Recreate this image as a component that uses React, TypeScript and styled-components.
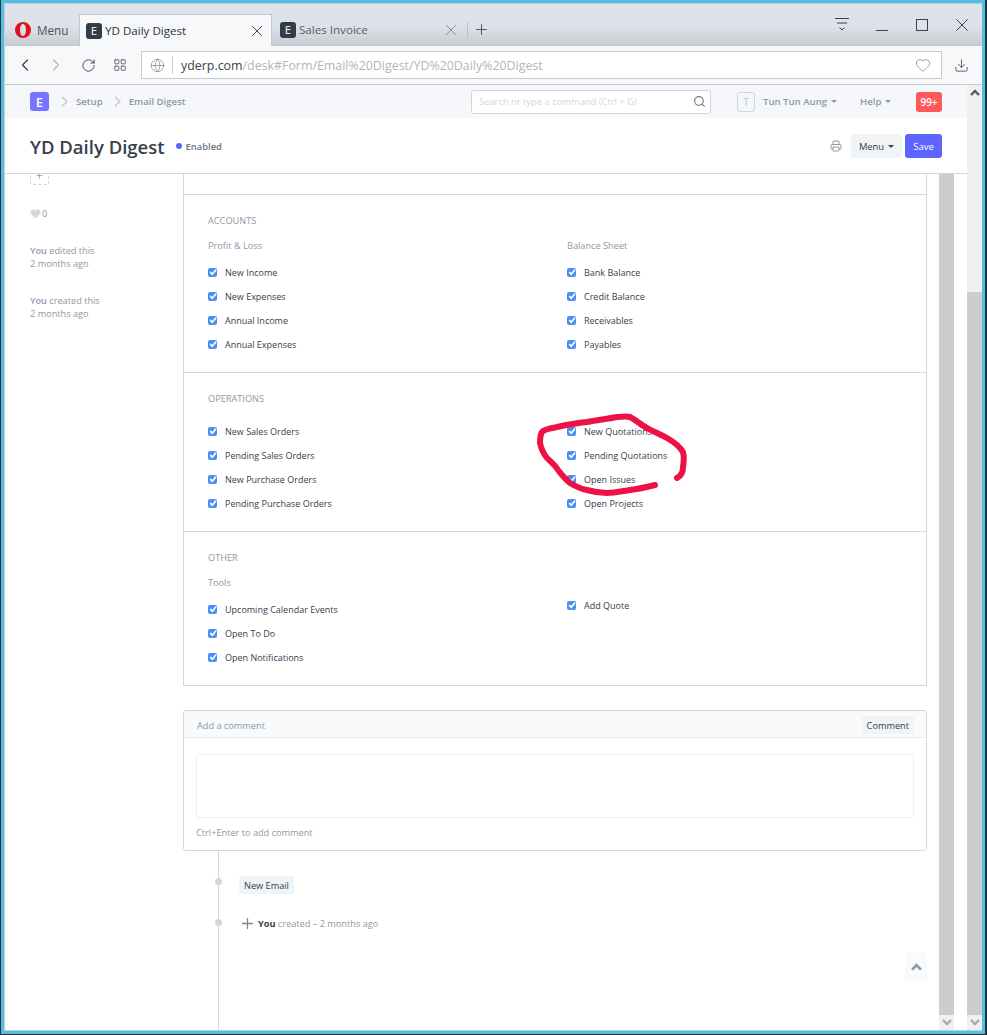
import React from "react";
import styled, { createGlobalStyle } from "styled-components";
import { ChevronLeft, ChevronRight, RotateCw, LayoutGrid, Globe, Heart, Download, X, Plus, Search, Printer } from "lucide-react";

const Global = createGlobalStyle`
  html, body { margin: 0; padding: 0; background: #fff; }
  * { box-sizing: border-box; }
  #root { width: 987px; height: 1035px; overflow: hidden; }
`;

const UI = `"Open Sans", "Noto Sans", sans-serif`;

const Frame = styled.div`
  width: 987px; height: 1035px; background: #52bfe6;
  border-style: solid; border-color: #2a2f38; border-width: 0 2px 1px 1px;
  padding: 3px 3px 3px 3px; font-family: ${UI};
`;
const Win = styled.div`
  height: 100%; display: flex; flex-direction: column; background: #fff;
  border-left: 1px solid #c9ccd1; border-top: 1px solid #c9ccd1; border-bottom: 1px solid #c9ccd1;
  overflow: hidden; position: relative;
`;
const TabBar = styled.div`
  height: 42px; flex: none; display: flex; align-items: flex-end;
  background: linear-gradient(#dfe4eb 0%, #dde2e9 55%, #c8ccd3 100%);
  border-bottom: 1px solid #c4c8ce;
`;
const MenuTab = styled.div`
  width: 74px; height: 31px; display: flex; align-items: center; padding-left: 10px; gap: 6px;
  font-size: 11.7px; color: #4a5260;
`;
const Tab = styled.div<{ $active?: boolean }>`
  height: ${p => (p.$active ? "32px" : "31px")}; width: ${p => (p.$active ? "193px" : "195px")};
  display: flex; align-items: center;
  padding: 0 ${p => (p.$active ? "5px" : "7px")} 0 ${p => (p.$active ? "6px" : "8px")}; gap: 3px;
  background: ${p => (p.$active ? "#f7f8fa" : "transparent")};
  border: ${p => (p.$active ? "1px solid #c4c8ce" : "none")}; border-bottom: none;
  font-size: 11.6px; color: ${p => (p.$active ? "#2c3440" : "#565e6a")};
  margin-bottom: ${p => (p.$active ? "-1px" : "0")};
  svg { margin-left: auto; color: ${p => (p.$active ? "#2c3440" : "#7d838c")}; }
`;
const Favicon = styled.span`
  width: 16px; height: 16px; border-radius: 3px; background: #333c49; color: #fff; flex: none;
  display: flex; align-items: center; justify-content: center; font-size: 11.5px;
`;
const NewTab = styled.div`
  height: 31px; display: flex; align-items: center; color: #3a424e;
  &::before { content: ""; width: 1px; height: 16px; background: #bdc2c9; margin-right: 5px; }
`;
const WinControls = styled.div`
  margin-left: auto; align-self: flex-start; display: flex; align-items: flex-start;
  color: #3a424e; padding: 14px 14px 0 0; gap: 28px;
`;
const ListIcon = styled.svg`
  margin-right: -1px;
`;
const Toolbar = styled.div`
  height: 39px; flex: none; display: flex; align-items: center; background: #f7f8fa;
  border-bottom: 1px solid #c6cad0; color: #3a424e;
`;
const NavIcon = styled.span<{ $w: number; $faded?: boolean }>`
  width: ${p => p.$w}px; flex: none; display: flex; justify-content: center;
  color: ${p => (p.$faded ? "#b6bbc2" : "#3a424e")};
`;
const Address = styled.div`
  width: 801px; height: 28px; flex: none; background: #fff; border: 1px solid #c8cbd0; display: flex; align-items: center;
  padding: 0 10px 0 8px; color: #7b8087;
`;
const Sep = styled.span`
  width: 1px; height: 18px; background: #c8cbd0; margin: 0 8px 0 7px;
`;
const Url = styled.span`
  font-size: 12.4px; color: #b2b6bc; white-space: nowrap; flex: 1;
  b { font-weight: 400; color: #3a424e; }
`;
const Viewport = styled.div`
  flex: 1; min-height: 0; display: flex;
`;
const PageCol = styled.div`
  width: 962px; flex: none; display: flex; flex-direction: column; min-height: 0;
`;
const Track = styled.div<{ $bg: string }>`
  width: 15px; flex: none; display: flex; flex-direction: column; background: ${p => p.$bg};
`;
const ArrowBtn = styled.div<{ $color: string; $bg?: string }>`
  height: 15px; flex: none; display: flex; align-items: center; justify-content: center;
  color: ${p => p.$color}; background: ${p => p.$bg || "transparent"};
`;
const Thumb = styled.div<{ $top: number }>`
  flex: 1; background: #cdcdcd; margin-top: ${p => p.$top}px;
`;
const Navbar = styled.div`
  height: 33px; flex: none; display: flex; align-items: center; background: #f5f7fa;
  padding: 0 25px; font-size: 9.6px; font-weight: 600; color: #8d99a6;
`;
const Logo = styled.span`
  width: 19px; height: 19px; border-radius: 3px; background: #7575ff; color: #fff; flex: none;
  display: flex; align-items: center; justify-content: center; font-size: 13px; font-weight: 600;
`;
const Crumb = styled.span<{ $ml: number }>`
  display: flex; align-items: center; color: #8d99a6; white-space: nowrap; margin-left: ${p => p.$ml}px;
  svg { color: #c0c6cc; margin-right: 8px; }
`;
const SearchBox = styled.div`
  width: 240px; height: 24px; flex: none; margin-left: auto; background: #fff; border: 1px solid #d1d8dd; border-radius: 3px;
  display: flex; align-items: center; justify-content: space-between; padding: 0 4px 0 7px;
  font-weight: 400; color: #d1d8dd; font-size: 9.4px; svg { color: #6c7680; }
`;
const Avatar = styled.span`
  width: 18px; height: 20px; border: 1px solid #d1d8dd; border-radius: 3px; margin-left: 26px; flex: none;
  display: flex; align-items: center; justify-content: center; color: #c0c6cc; font-weight: 400; font-size: 10px;
`;
const NavText = styled.span<{ $w: number; $ml?: number }>`
  width: ${p => p.$w}px; flex: none; white-space: nowrap; display: flex; align-items: center;
  margin-left: ${p => p.$ml || 0}px;
`;
const Caret = styled.i<{ $dark?: boolean }>`
  display: inline-block; margin-left: 4px; width: 0; height: 0;
  border-left: 3px solid transparent; border-right: 3px solid transparent;
  border-top: 3px solid ${p => (p.$dark ? "#36414c" : "#8d99a6")};
`;
const Badge = styled.span`
  width: 26px; height: 20px; flex: none; border-radius: 3px; background: #ff5858; color: #fff;
  display: flex; align-items: center; justify-content: center; font-size: 10px; font-weight: 600;
`;
const PageHead = styled.div`
  height: 56px; flex: none; display: flex; align-items: center; background: #fff;
  border-bottom: 1px solid #d1d8dd; padding: 1px 25px 0;
`;
const Title = styled.h1`
  margin: 0; font-size: 18.5px; font-weight: 600; color: #36414c; white-space: nowrap;
`;
const Indicator = styled.span`
  display: flex; align-items: center; margin-left: 11px; font-size: 9.4px; font-weight: 600; color: #6c7680;
  &::before { content: ""; width: 6px; height: 6px; border-radius: 50%; background: #5e64ff; margin-right: 4px; }
`;
const HeadActions = styled.div`
  margin-left: auto; display: flex; align-items: center; color: #8d99a6;
`;
const Btn = styled.span<{ $primary?: boolean }>`
  height: 24px; display: flex; align-items: center; justify-content: center; border-radius: 3px;
  width: ${p => (p.$primary ? "37px" : "51px")}; margin-left: ${p => (p.$primary ? "3px" : "9px")};
  background: ${p => (p.$primary ? "#5e64ff" : "#f0f4f7")};
  color: ${p => (p.$primary ? "#fff" : "#36414c")}; font-size: 9.4px;
`;
const Scroll = styled.div`
  flex: 1; min-height: 0; display: flex; position: relative; overflow: hidden;
`;
const Sidebar = styled.aside`
  width: 178px; flex: none; padding-left: 25px; font-size: 9.2px; line-height: 13px; color: #8d99a6;
  b { font-weight: 600; }
`;
const TagAdd = styled.div`
  width: 19px; height: 11px; border: 1px dashed #d1d8dd; border-top: none; border-radius: 0 0 3px 3px;
  display: flex; justify-content: center; align-items: flex-end; color: #8d99a6; overflow: hidden;
  svg { margin-bottom: 4px; flex: none; }
`;
const Likes = styled.div`
  margin-top: 22px; display: flex; align-items: center; gap: 1px; height: 13px; color: #8d99a6;
`;
const SideEntry = styled.div`
  margin-top: 24px;
`;
const Main = styled.main`
  width: 744px; flex: none; display: flex; flex-direction: column;
`;
const Form = styled.section`
  border: 1px solid #d1d8dd; border-top: none; padding-top: 20px;
`;
const Section = styled.div`
  border-top: 1px solid #d1d8dd; padding: 19px 24px 16px;
`;
const SectionHead = styled.h4`
  margin: 0; font-size: 9.2px; line-height: 14px; font-weight: 400; color: #8d99a6; text-transform: uppercase;
`;
const Cols = styled.div`
  display: grid; grid-template-columns: 359px 1fr;
`;
const SubHead = styled.div`
  margin-top: 11px; font-size: 9.2px; line-height: 14px; color: #8d99a6;
`;
const List = styled.div<{ $top: number }>`
  margin-top: ${p => p.$top}px;
`;
const Row = styled.label`
  height: 24px; display: flex; align-items: center; font-size: 9px; color: #36414c; white-space: nowrap;
`;
const Box = styled.span`
  width: 9px; height: 9px; border-radius: 2px; background: #4a90f0; margin-right: 8px; flex: none;
  display: flex; align-items: center; justify-content: center;
`;
const Comment = styled.section`
  margin-top: 24px; border: 1px solid #d1d8dd; border-radius: 3px; height: 141px; flex: none;
`;
const CommentHead = styled.div`
  height: 27px; display: flex; align-items: center; justify-content: space-between; padding: 2px 12px 0 13px;
  background: #f8fafc; border-bottom: 1px solid #ebeff2; border-radius: 3px 3px 0 0;
  font-size: 9.2px; color: #8d99a6;
`;
const SmallBtn = styled.span`
  height: 18px; padding: 0 5px; display: flex; align-items: center; background: #f0f4f7; border-radius: 3px;
  color: #36414c; font-size: 9.2px;
`;
const TextArea = styled.div`
  margin: 16px 12px 0; height: 64px; border: 1px solid #ebeff2; border-radius: 3px;
`;
const Hint = styled.div`
  margin: 8px 12px 0; font-size: 9.2px; line-height: 14px; color: #8d99a6;
`;
const Timeline = styled.div`
  flex: 1; margin-left: 35px; border-left: 1px solid #d1d8dd; padding: 25px 0 0 20px; position: relative;
`;
const TimelineItem = styled.div<{ $mt?: number; $dot: number }>`
  position: relative; display: flex; align-items: center; height: 18px; font-size: 9.2px; color: #8d99a6;
  margin-top: ${p => p.$mt || 0}px;
  b { font-weight: 700; color: #36414c; }
  &::before {
    content: ""; position: absolute; left: -24px; top: ${p => p.$dot}px; width: 7px; height: 7px; border-radius: 50%; background: #d1d8dd;
  }
  svg { color: #7b8794; margin: 0 2px 0 0; }
`;
const ToTop = styled.div`
  position: absolute; left: 900px; top: 779px; width: 22px; height: 28px; border-radius: 3px; background: #f8fafc;
  display: flex; align-items: center; justify-content: center; color: #8d99a6;
`;
const Ink = styled.svg`
  position: absolute; left: 0; top: 0; pointer-events: none;
`;
const Spacer = styled.div`
  width: 13px; flex: none;
`;
const Gap = styled.div`
  width: 12px; flex: none;
`;

const Chev = ({ up, size = 11, w = 2.4 }: { up?: boolean; size?: number; w?: number }) => (
  <svg width={size} height={size * 0.7} viewBox="0 0 10 7" fill="none" stroke="currentColor" strokeWidth={w}>
    <path d={up ? "M1 6l4-4 4 4" : "M1 1l4 4 4-4"} />
  </svg>
);
const CrumbChev = () => (
  <svg width="7" height="11" viewBox="0 0 7 11" fill="none" stroke="currentColor" strokeWidth="1.3"><path d="M1 .7l5 4.8-5 4.8" /></svg>
);
const Tick = () => (
  <svg width="8" height="8" viewBox="0 0 10 10" fill="none" stroke="#fff" strokeWidth="2.2"><path d="M1.5 5.2l2.6 2.6 4.6-5.6" /></svg>
);
const Opera = () => (
  <svg width="16" height="16" viewBox="0 0 16 16"><path fillRule="evenodd" fill="#e0101f" d="M8 0a8 8 0 1 0 0 16A8 8 0 0 0 8 0zm0 2c1.8 0 3 2.6 3 6s-1.2 6-3 6-3-2.6-3-6 1.2-6 3-6z" /></svg>
);
const Check = ({ label }: { label: string }) => (
  <Row><Box><Tick /></Box>{label}</Row>
);
const Checks = ({ items, top }: { items: string[]; top: number }) => (
  <List $top={top}>{items.map(i => <Check key={i} label={i} />)}</List>
);

export default function App() {
  return (
    <Frame>
      <Global />
      <Win>
        <TabBar>
          <MenuTab><Opera />Menu</MenuTab>
          <Tab $active><Favicon>E</Favicon>YD Daily Digest<X size={18} strokeWidth={1.2} /></Tab>
          <Tab><Favicon>E</Favicon>Sales Invoice<X size={18} strokeWidth={1.2} /></Tab>
          <NewTab><Plus size={17} strokeWidth={1.2} /></NewTab>
          <WinControls>
            <ListIcon width="14" height="14" viewBox="0 0 14 14" fill="none" stroke="currentColor"><path d="M0 .5h14M2 5h10M4.5 9.5l2.5 2.5 2.5-2.5" /></ListIcon>
            <svg width="12" height="14" viewBox="0 0 12 14" fill="none" stroke="currentColor"><path d="M0 12.5h12" /></svg>
            <svg width="12" height="14" viewBox="0 0 12 14" fill="none" stroke="currentColor"><rect x=".5" y="1.5" width="11" height="11" /></svg>
            <svg width="12" height="14" viewBox="0 0 12 14" fill="none" stroke="currentColor"><path d="M.3 1.3l11.4 11.4M11.7 1.3L.3 12.7" /></svg>
          </WinControls>
        </TabBar>
        <Toolbar>
          <NavIcon $w={40}><ChevronLeft size={20} strokeWidth={1.5} /></NavIcon>
          <NavIcon $w={22} $faded><ChevronRight size={20} strokeWidth={1.5} /></NavIcon>
          <NavIcon $w={42}><RotateCw size={15} strokeWidth={1.5} /></NavIcon>
          <NavIcon $w={22}><LayoutGrid size={14} strokeWidth={1.3} /></NavIcon>
          <NavIcon $w={10} />
          <Address>
            <Globe size={15} strokeWidth={1.1} />
            <Sep />
            <Url><b>yderp.com</b>/desk#Form/Email%20Digest/YD%20Daily%20Digest</Url>
            <Heart size={16} strokeWidth={1.1} />
          </Address>
          <NavIcon $w={38}><Download size={15} strokeWidth={1.3} /></NavIcon>
        </Toolbar>
        <Viewport>
          <PageCol>
            <Navbar>
              <Logo>E</Logo>
              <Crumb $ml={12}><CrumbChev />Setup</Crumb>
              <Crumb $ml={11}><CrumbChev />Email Digest</Crumb>
              <SearchBox>Search or type a command (Ctrl + G)<Search size={13} /></SearchBox>
              <Avatar>T</Avatar>
              <NavText $w={97} $ml={8}>Tun Tun Aung<Caret /></NavText>
              <NavText $w={56}>Help<Caret /></NavText>
              <Badge>99+</Badge>
            </Navbar>
            <PageHead>
              <Title>YD Daily Digest</Title>
              <Indicator>Enabled</Indicator>
              <HeadActions>
                <Printer size={12} />
                <Btn>Menu<Caret $dark /></Btn>
                <Btn $primary>Save</Btn>
              </HeadActions>
            </PageHead>
            <Scroll>
              <Sidebar>
                <TagAdd><Plus size={9} /></TagAdd>
                <Likes><Heart size={11} fill="#d1d8dd" color="#d1d8dd" />0</Likes>
                <SideEntry><b>You</b> edited this<br />2 months ago</SideEntry>
                <SideEntry><b>You</b> created this<br />2 months ago</SideEntry>
              </Sidebar>
              <Main>
                <Form>
                  <Section>
                    <SectionHead>Accounts</SectionHead>
                    <Cols>
                      <div><SubHead>Profit &amp; Loss</SubHead><Checks top={7} items={["New Income", "New Expenses", "Annual Income", "Annual Expenses"]} /></div>
                      <div><SubHead>Balance Sheet</SubHead><Checks top={7} items={["Bank Balance", "Credit Balance", "Receivables", "Payables"]} /></div>
                    </Cols>
                  </Section>
                  <Section>
                    <SectionHead>Operations</SectionHead>
                    <Cols>
                      <Checks top={13} items={["New Sales Orders", "Pending Sales Orders", "New Purchase Orders", "Pending Purchase Orders"]} />
                      <Checks top={13} items={["New Quotations", "Pending Quotations", "Open Issues", "Open Projects"]} />
                    </Cols>
                  </Section>
                  <Section>
                    <SectionHead>Other</SectionHead>
                    <Cols>
                      <div><SubHead>Tools</SubHead><Checks top={7} items={["Upcoming Calendar Events", "Open To Do", "Open Notifications"]} /></div>
                      <Checks top={28} items={["Add Quote"]} />
                    </Cols>
                  </Section>
                </Form>
                <Comment>
                  <CommentHead>Add a comment<SmallBtn>Comment</SmallBtn></CommentHead>
                  <TextArea />
                  <Hint>Ctrl+Enter to add comment</Hint>
                </Comment>
                <Timeline>
                  <TimelineItem $dot={2}><SmallBtn>New Email</SmallBtn></TimelineItem>
                  <TimelineItem $mt={20} $dot={5}><Plus size={17} strokeWidth={1.8} /><b>You</b>&nbsp;created – 2 months ago</TimelineItem>
                </Timeline>
              </Main>
              <Gap />
              <Track $bg="#fff">
                <Thumb $top={0} />
                <ArrowBtn $color="#a9a9a9" $bg="#f0f0f0"><Chev size={10} /></ArrowBtn>
              </Track>
              <Spacer />
              <ToTop><Chev up size={11} /></ToTop>
            </Scroll>
          </PageCol>
          <Track $bg="#f0f0f0">
            <ArrowBtn $color="#5a5a5a"><Chev up size={10} /></ArrowBtn>
            <Thumb $top={192} />
            <ArrowBtn $color="#a9a9a9" $bg="#f0f0f0"><Chev size={10} /></ArrowBtn>
          </Track>
        </Viewport>
        <Ink width="978" height="1030" viewBox="5 4 978 1030" fill="none">
          <path d="M677 478c4-2 6-6 6-11 1-6 1-11 0-15-3-5-9-10-16-14-7-4-13-6-20-10-6-3-11-8-17-11-4-1-9 0-13 0-10 2-20 3-30 5-10 1-21 3-30 5-6 1-13 2-15 5-2 3-2 7-2 11 1 5 3 10 7 15 4 4 8 7 11 12 4 5 7 9 12 13 5 3 11 6 17 7 7 2 14 3 20 3 8 0 16-2 23-3 8-1 17-3 25-5" stroke="#ee1146" strokeWidth="6" strokeLinecap="round" strokeLinejoin="round" />
        </Ink>
      </Win>
    </Frame>
  );
}
